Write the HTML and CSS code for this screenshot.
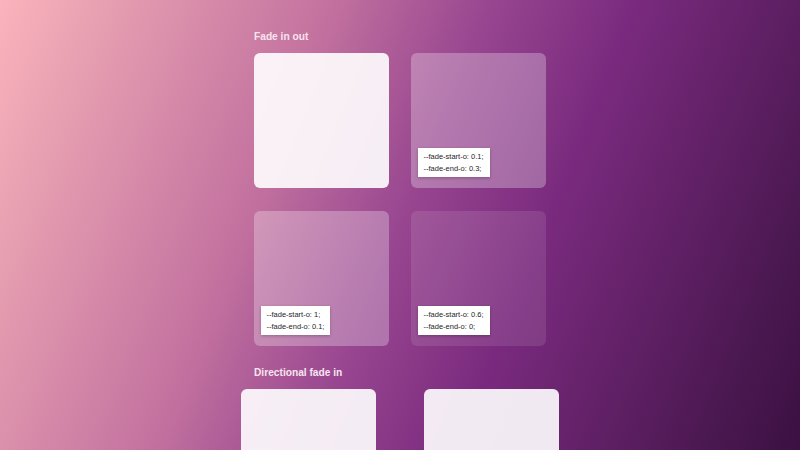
FILE: index.html
```html
<!DOCTYPE html>
<html lang="en">
<head>
<meta charset="utf-8">
<title>Fade demos</title>
<link rel="stylesheet" href="styles.css">
</head>
<body>
<main class="page">
  <section class="section">
    <h2 class="title">Fade in out</h2>
    <div class="grid">
      <div class="card card-strong"></div>
      <div class="card card-mid">
        <div class="label">--fade-start-o: 0.1;<br>--fade-end-o: 0.3;</div>
      </div>
      <div class="card card-mid">
        <div class="label">--fade-start-o: 1;<br>--fade-end-o: 0.1;</div>
      </div>
      <div class="card card-faint">
        <div class="label">--fade-start-o: 0.6;<br>--fade-end-o: 0;</div>
      </div>
    </div>
  </section>
  <section class="section section-dir">
    <h2 class="title title-dir">Directional fade in</h2>
    <div class="grid grid-wide">
      <div class="card card-strong"></div>
      <div class="card card-strong"></div>
    </div>
  </section>
</main>
</body>
</html>
```

FILE: styles.css
```css
html {
  height: 100%;
  background: linear-gradient(112deg, #fbb4bc 0%, #e9a2b2 9.3%, #c3729f 33.7%, #984690 50%, #7a2a7e 65%, #4a1850 90.7%, #3b1042 100%) fixed;
}

body {
  margin: 0;
  min-height: 100%;
  font-family: "Liberation Sans", Arial, sans-serif;
}

.page {
  width: 292px;
  margin: 0 auto;
  padding-top: 31px;
}

.title {
  margin: 0 0 10px;
  font-size: 10.2px;
  line-height: 12px;
  font-weight: 700;
  color: #f7e4f1;
}

.title-dir {
  margin-top: 21px;
  margin-bottom: 10px;
}

.grid {
  display: grid;
  grid-template-columns: 135px 135px;
  justify-content: space-between;
  row-gap: 23px;
}

.grid-wide {
  margin: 0 -13px;
}

.card {
  height: 135px;
  border-radius: 6px;
  display: flex;
  align-items: flex-end;
  padding: 0 0 11px 6.5px;
  box-sizing: border-box;
}

.card-strong {
  background: rgba(255, 255, 255, 0.9);
}

.card-mid {
  background: rgba(255, 255, 255, 0.28);
}

.card-faint {
  background: rgba(255, 255, 255, 0.1);
}

.label {
  background: #fff;
  color: #262626;
  font-size: 7.5px;
  line-height: 12px;
  padding: 2.5px 6px;
  white-space: nowrap;
  box-shadow: 0 1px 3px rgba(0, 0, 0, 0.25);
}
```
